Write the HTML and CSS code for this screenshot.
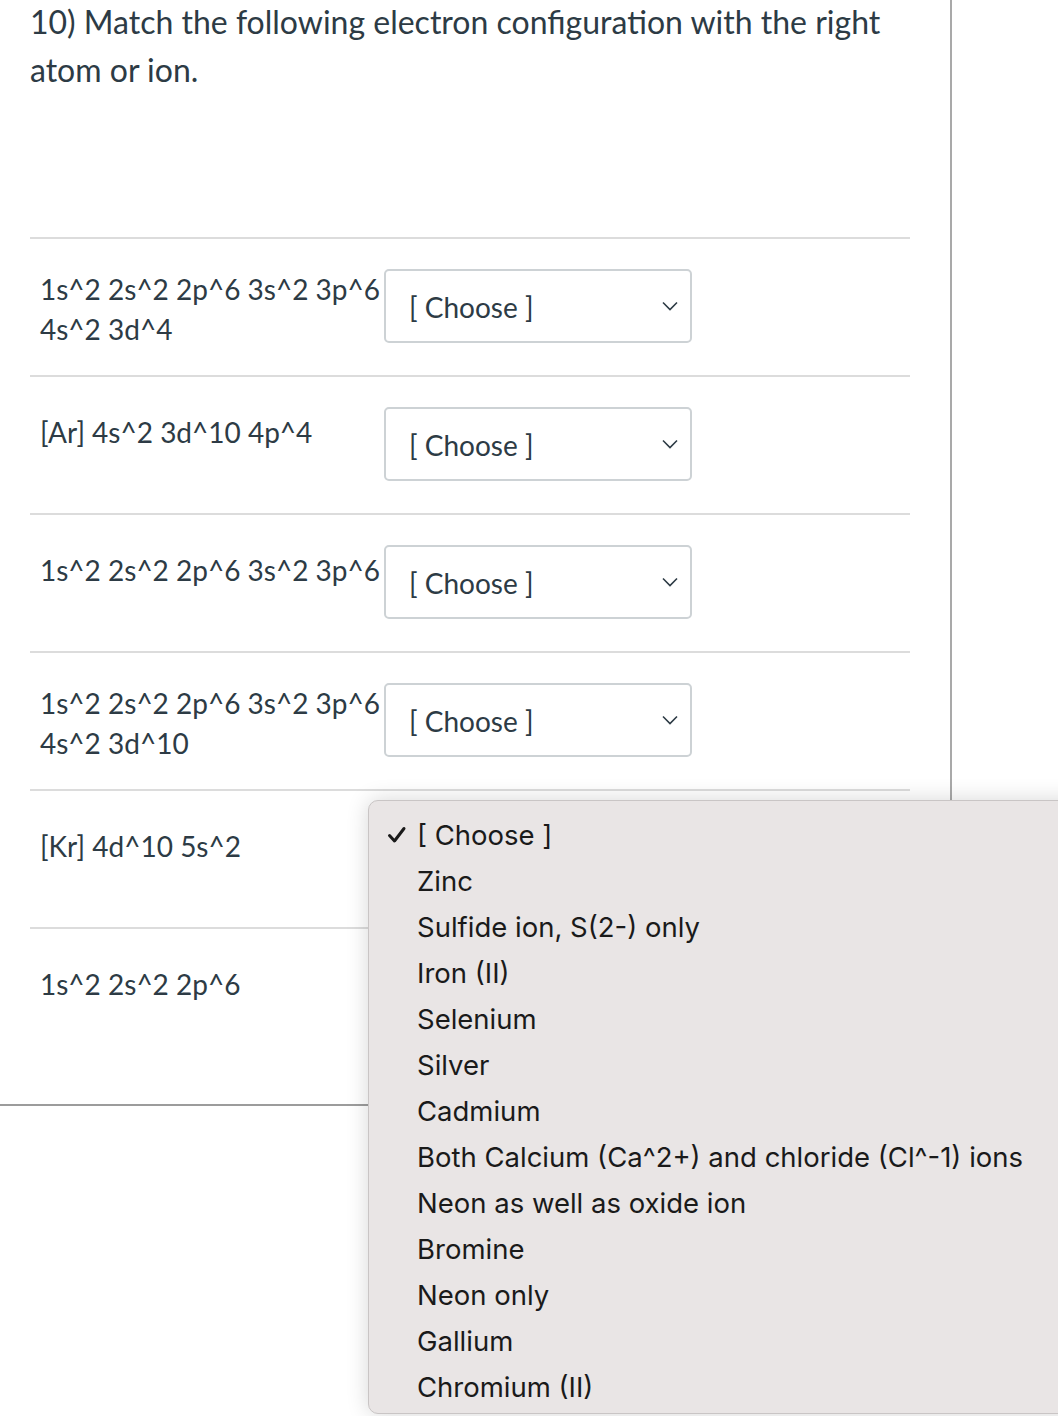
FILE: index.html
```html
<!DOCTYPE html>
<html>
<head>
<meta charset="utf-8">
<link rel="stylesheet" href="styles.css">
</head>
<body>
<div class="question">
  <div class="qtext">10) Match the following electron configuration with the right atom or ion.</div>
  <div class="answers">
    <div class="row">
      <div class="label">1s^2 2s^2 2p^6 3s^2 3p^6 4s^2 3d^4</div>
      <div class="select"><span>[ Choose ]</span><svg class="chev" width="16" height="10" viewBox="0 0 16 10"><path d="M1 1.5 L8 8.5 L15 1.5" fill="none" stroke="#2d3b45" stroke-width="1.6"/></svg></div>
    </div>
    <div class="row">
      <div class="label single">[Ar] 4s^2 3d^10 4p^4</div>
      <div class="select"><span>[ Choose ]</span><svg class="chev" width="16" height="10" viewBox="0 0 16 10"><path d="M1 1.5 L8 8.5 L15 1.5" fill="none" stroke="#2d3b45" stroke-width="1.6"/></svg></div>
    </div>
    <div class="row">
      <div class="label single">1s^2 2s^2 2p^6 3s^2 3p^6</div>
      <div class="select"><span>[ Choose ]</span><svg class="chev" width="16" height="10" viewBox="0 0 16 10"><path d="M1 1.5 L8 8.5 L15 1.5" fill="none" stroke="#2d3b45" stroke-width="1.6"/></svg></div>
    </div>
    <div class="row">
      <div class="label">1s^2 2s^2 2p^6 3s^2 3p^6 4s^2 3d^10</div>
      <div class="select"><span>[ Choose ]</span><svg class="chev" width="16" height="10" viewBox="0 0 16 10"><path d="M1 1.5 L8 8.5 L15 1.5" fill="none" stroke="#2d3b45" stroke-width="1.6"/></svg></div>
    </div>
    <div class="row">
      <div class="label single">[Kr] 4d^10 5s^2</div>
    </div>
    <div class="row">
      <div class="label single">1s^2 2s^2 2p^6</div>
    </div>
  </div>
</div>
<div class="menu">
  <div class="item checked"><svg class="check" width="20" height="18" viewBox="0 0 20 18"><path d="M2.5 9.5 L7.5 15 L17 2.5" fill="none" stroke="#1a1a1a" stroke-width="3" stroke-linecap="round" stroke-linejoin="round"/></svg>[ Choose ]</div>
  <div class="item">Zinc</div>
  <div class="item">Sulfide ion, S(2-) only</div>
  <div class="item">Iron (II)</div>
  <div class="item">Selenium</div>
  <div class="item">Silver</div>
  <div class="item">Cadmium</div>
  <div class="item">Both Calcium (Ca^2+) and chloride (Cl^-1) ions</div>
  <div class="item">Neon as well as oxide ion</div>
  <div class="item">Bromine</div>
  <div class="item">Neon only</div>
  <div class="item">Gallium</div>
  <div class="item">Chromium (II)</div>
</div>
</body>
</html>
```

FILE: styles.css
```css
html, body {
  margin: 0;
  padding: 0;
  background: #fff;
  overflow: hidden;
}
body {
  width: 1058px;
  height: 1416px;
  position: relative;
  font-family: Lato, "Liberation Sans", sans-serif;
  color: #2d3b45;
}
.question {
  width: 950px;
  height: 1106px;
  border-right: 2px solid #a9a9a9;
  border-bottom: 2px solid #9c9c9c;
}
.qtext {
  padding: 0 40px 0 30px;
  margin-top: -2px;
  font-size: 32px;
  line-height: 48px;
  height: 239px;
}
.answers {
  margin-left: 30px;
  width: 880px;
}
.row {
  border-top: 2px solid #dcdcdc;
  height: 106px;
  padding-top: 30px;
  display: flex;
  align-items: flex-start;
}
.label {
  width: 345px;
  padding-left: 10px;
  flex: none;
  font-size: 28px;
  line-height: 40px;
}
.label.single {
  margin-top: 5px;
}
.select {
  width: 269px;
  height: 70px;
  border: 2px solid #cdd2d5;
  border-radius: 5px;
  display: flex;
  align-items: center;
  justify-content: space-between;
  padding: 0 12px 0 23px;
  margin-left: -1px;
  font-size: 28px;
}
.select span {
  margin-top: 2px;
}
.chev {
  display: block;
}
.menu {
  position: absolute;
  left: 368px;
  top: 800px;
  width: 720px;
  height: 614px;
  background: #e9e5e5;
  border: 1px solid #c9c5c5;
  border-radius: 10px;
  box-shadow: 0 0 22px rgba(0, 0, 0, 0.16);
  padding-top: 11px;
  box-sizing: border-box;
  font-family: Inter, "Noto Sans", sans-serif;
  font-size: 27.5px;
  color: #1a1a1a;
}
.item {
  height: 46px;
  line-height: 46px;
  padding-left: 48px;
  position: relative;
  white-space: nowrap;
}
.check {
  position: absolute;
  left: 18px;
  top: 14px;
}
```
